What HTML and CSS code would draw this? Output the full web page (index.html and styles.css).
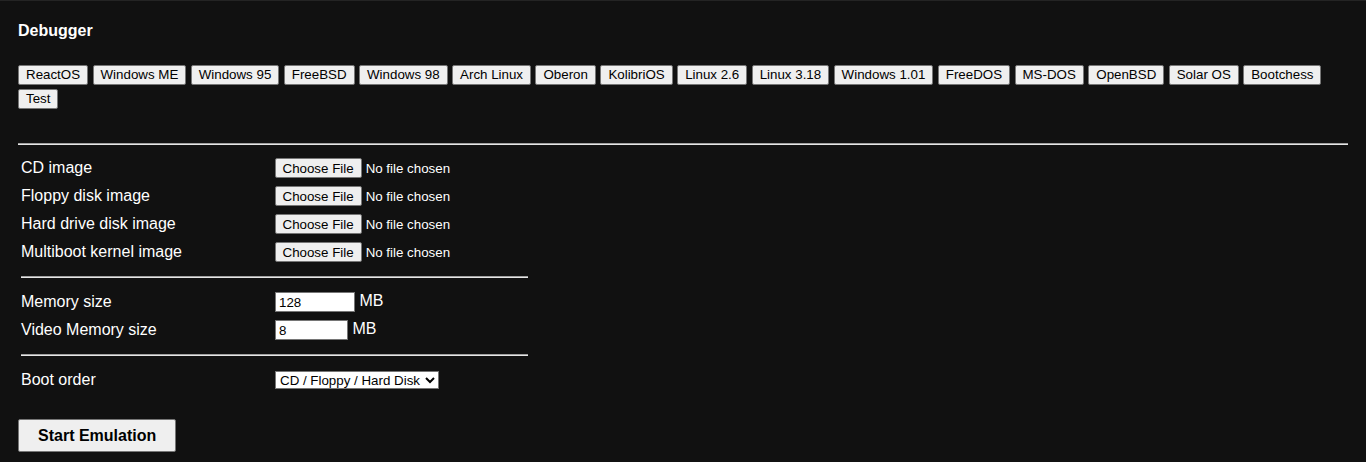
FILE: index.html
```html
<!DOCTYPE html>
<html>
<head>
<meta charset="utf-8">
<link rel="stylesheet" href="styles.css">
</head>
<body>
<div class="page">
  <h4 class="title">Debugger</h4>
  <div class="oses">
    <button class="os">ReactOS</button>
    <button class="os">Windows ME</button>
    <button class="os">Windows 95</button>
    <button class="os">FreeBSD</button>
    <button class="os">Windows 98</button>
    <button class="os">Arch Linux</button>
    <button class="os">Oberon</button>
    <button class="os">KolibriOS</button>
    <button class="os">Linux 2.6</button>
    <button class="os">Linux 3.18</button>
    <button class="os">Windows 1.01</button>
    <button class="os">FreeDOS</button>
    <button class="os">MS-DOS</button>
    <button class="os">OpenBSD</button>
    <button class="os">Solar OS</button>
    <button class="os">Bootchess</button>
    <button class="os">Test</button>
  </div>
  <hr class="sep">
  <table class="opts">
    <tr><td class="label">CD image</td><td class="ctl"><input class="file" type="file"></td></tr>
    <tr><td class="label">Floppy disk image</td><td class="ctl"><input class="file" type="file"></td></tr>
    <tr><td class="label">Hard drive disk image</td><td class="ctl"><input class="file" type="file"></td></tr>
    <tr><td class="label">Multiboot kernel image</td><td class="ctl"><input class="file" type="file"></td></tr>
    <tr class="hr-row"><td colspan="2"><hr class="sep inner"></td></tr>
    <tr><td class="label">Memory size</td><td class="ctl"><input class="num mem" type="number" value="128" min="16" max="2048" step="16"> MB</td></tr>
    <tr><td class="label">Video Memory size</td><td class="ctl"><input class="num vmem" type="number" value="8" min="1" max="128" step="1"> MB</td></tr>
    <tr class="hr-row"><td colspan="2"><hr class="sep inner"></td></tr>
    <tr><td class="label">Boot order</td><td class="ctl">
      <select class="boot">
        <option>CD / Floppy / Hard Disk</option>
        <option>CD / Hard Disk / Floppy</option>
        <option>Floppy / CD / Hard Disk</option>
        <option>Floppy / Hard Disk / CD</option>
        <option>Hard Disk / CD / Floppy</option>
        <option>Hard Disk / Floppy / CD</option>
      </select>
    </td></tr>
  </table>
  <button class="start">Start Emulation</button>
</div>
</body>
</html>
```

FILE: styles.css
```css
html, body {
  margin: 0;
  padding: 0;
  background: #111111;
}
body {
  border-top: 1px solid #242424;
  color: #ffffff;
  font-family: "Liberation Sans", Arial, sans-serif;
  font-size: 16px;
}
.page {
  padding: 0 18px 20px;
}
.title {
  margin: 21px 0 0;
  font-size: 16px;
  font-weight: bold;
  line-height: normal;
}
.oses {
  margin-top: 25px;
  display: flex;
  flex-wrap: wrap;
  column-gap: 4.45px;
  row-gap: 4px;
}
.os {
  box-sizing: border-box;
  height: 20px;
  margin: 0;
  padding: 1px 7px;
  background: #efefef;
  color: #000000;
  border: 1px solid #767676;
  border-radius: 2px;
  font-family: "Liberation Sans", Arial, sans-serif;
  font-size: 13.3333px;
  line-height: 16px;
}
.sep {
  height: 0;
  margin: 34px 0 8px;
  border: none;
  border-top: 1px solid #a0a0a0;
  border-bottom: 1px solid #e6e6e6;
}
.sep.inner {
  margin: 8px 0;
}
.opts {
  border-spacing: 2px;
  margin: 0;
}
.opts td {
  padding: 1px;
  height: 24px;
  vertical-align: middle;
}
.opts .hr-row td {
  height: auto;
}
.label {
  width: 250px;
  font-size: 16px;
}
.ctl {
  width: 253px;
  font-size: 16px;
}
.file {
  font-family: "Liberation Sans", Arial, sans-serif;
  font-size: 13.3333px;
  color: #ffffff;
  vertical-align: middle;
}
.file::file-selector-button {
  box-sizing: border-box;
  height: 20px;
  margin: 0 4px 0 0;
  padding: 1px 7px 1px 6.5px;
  background: #efefef;
  color: #000000;
  border: 1px solid #767676;
  border-radius: 2px;
  font-family: "Liberation Sans", Arial, sans-serif;
  font-size: 13.3333px;
}
.num {
  box-sizing: border-box;
  height: 20px;
  margin: 0;
  padding: 1px 2px 1px 3px;
  background: #ffffff;
  color: #000000;
  border: 1px solid #767676;
  border-radius: 0;
  font-family: "Liberation Sans", Arial, sans-serif;
  font-size: 13.3333px;
  vertical-align: middle;
}
.num::-webkit-inner-spin-button,
.num::-webkit-outer-spin-button {
  -webkit-appearance: none;
  margin: 0;
}
.mem { width: 80px; }
.vmem { width: 73px; }
.boot {
  box-sizing: border-box;
  width: 164px;
  height: 18px;
  margin: 0;
  background: #ffffff;
  color: #000000;
  border: 1px solid #767676;
  font-family: "Liberation Sans", Arial, sans-serif;
  font-size: 13.3333px;
  vertical-align: middle;
}
.start {
  display: block;
  box-sizing: border-box;
  margin-top: 24px;
  height: 33px;
  padding: 6px 19px;
  background: #efefef;
  color: #000000;
  border: 1px solid #767676;
  border-radius: 2px;
  font-family: "Liberation Sans", Arial, sans-serif;
  font-size: 16px;
  font-weight: bold;
  line-height: 19px;
}
```
